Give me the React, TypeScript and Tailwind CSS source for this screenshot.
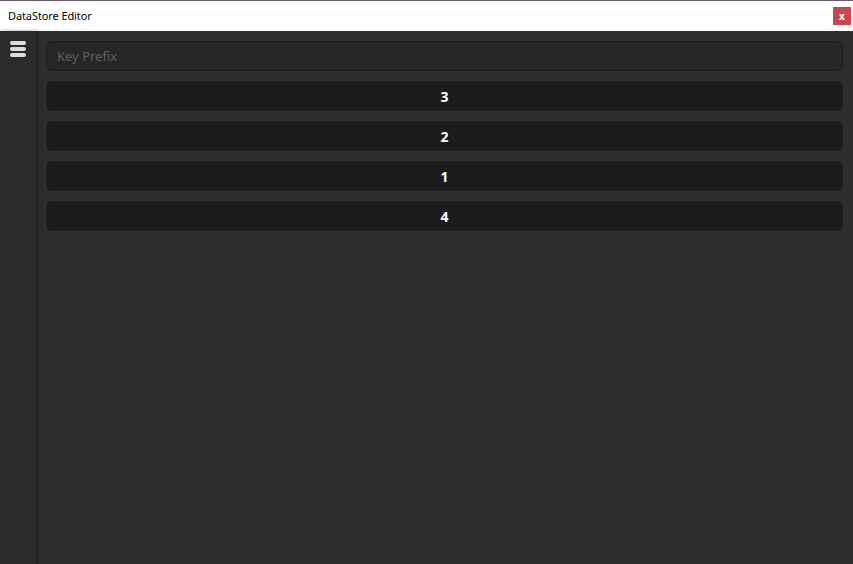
import { useState } from "react";

const keys = ["3", "2", "1", "4"];

export default function App() {
  const [prefix, setPrefix] = useState("");

  return (
    <div
      className="flex h-[564px] w-[853px] flex-col overflow-hidden bg-[#2e2e2e]"
      style={{ fontFamily: '"Noto Sans", "Open Sans", sans-serif' }}
    >
      {/* title bar */}
      <div className="flex h-[31px] shrink-0 items-center justify-between border-t border-[#6e5a70] bg-white pl-[8px] pr-[2px]">
        <span className="text-[11px] tracking-[-0.1px] text-black">DataStore Editor</span>
        <button
          type="button"
          title="Close"
          className="flex h-[18px] w-[18px] items-center justify-center bg-[#c9474f] text-[10px] font-bold leading-none text-white"
        >
          x
        </button>
      </div>

      <div className="flex min-h-0 flex-1">
        {/* sidebar */}
        <div className="relative w-[36px] shrink-0 bg-[#2b2b2b] shadow-[2px_0_4px_rgba(0,0,0,0.35)]">
          <button type="button" title="Menu" className="mt-[10px] ml-[10px] flex w-[16px] flex-col gap-[2px]">
            <span className="h-[4px] w-[16px] rounded-full bg-[#dcdcdc]" />
            <span className="h-[4px] w-[16px] rounded-full bg-[#dcdcdc]" />
            <span className="h-[4px] w-[16px] rounded-full bg-[#dcdcdc]" />
          </button>
        </div>

        {/* content */}
        <div className="flex flex-1 flex-col gap-[10px] pt-[10px] pl-[10px] pr-[10px]">
          <input
            value={prefix}
            onChange={(e) => setPrefix(e.target.value)}
            placeholder="Key Prefix"
            className="h-[30px] w-full rounded-[6px] border border-[#1f1f1f] bg-[#272727] px-[10px] text-[13px] text-[#cfcfcf] outline-none placeholder:text-[#5f5f5f]"
          />
          {keys.map((k) => (
            <button
              key={k}
              type="button"
              className="flex h-[30px] w-full items-center justify-center rounded-[6px] bg-[#1c1c1c] pt-[1px] text-[14px] font-bold text-white"
            >
              {k}
            </button>
          ))}
        </div>
      </div>
    </div>
  );
}
